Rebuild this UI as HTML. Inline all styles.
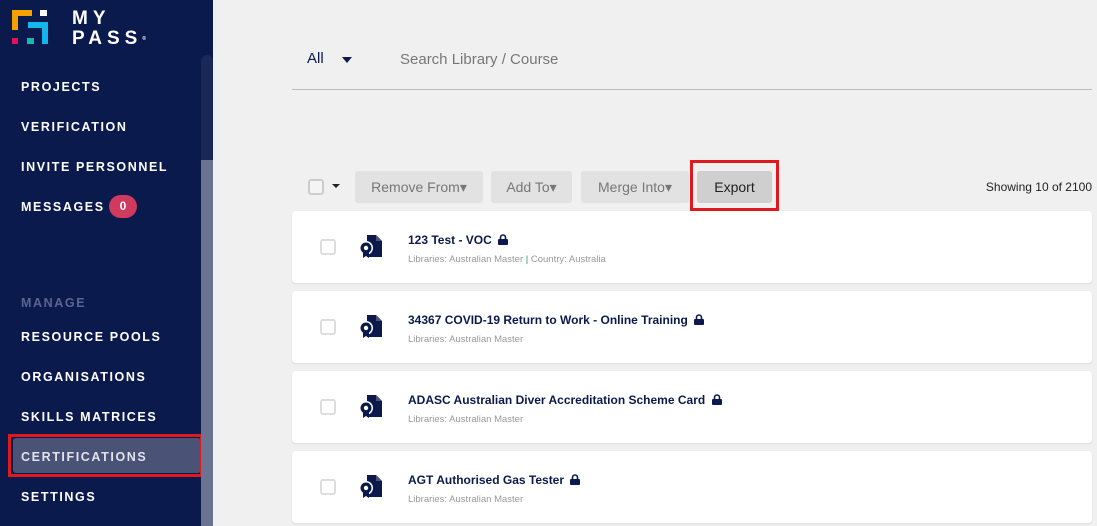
<!DOCTYPE html><html><head><style>
*{box-sizing:border-box;margin:0;padding:0}
body{width:1097px;height:526px;overflow:hidden;background:#f0f0f0;font-family:"Liberation Sans",sans-serif;position:relative}
.sb{position:absolute;left:0;top:0;width:213px;height:526px;background:#0b1a4c}
.nav{position:absolute;left:21px;color:#fff;font-weight:bold;font-size:12.5px;letter-spacing:1.6px}
.track{position:absolute;left:201px;top:55px;width:12px;height:471px;background:#1a2858;border-radius:6px 6px 0 0}
.thumb{position:absolute;left:201px;top:160px;width:12px;height:366px;background:#6a7390}
.btn{position:absolute;top:171px;height:32px;background:#e2e2e2;border-radius:3px;color:#777;font-size:14px;line-height:32px;text-align:center}
.card{position:absolute;left:292px;width:800px;height:72px;background:#fff;border-radius:4px;box-shadow:0 1px 2px rgba(0,0,0,.08)}
.cb{position:absolute;left:28px;top:28px;width:16px;height:16px;border:2px solid #ddd;border-radius:3px}
.ic{position:absolute;left:66px;top:22px}
.t{position:absolute;left:116px;top:22px;font-size:12px;font-weight:bold;color:#0b1a4c}
.s{position:absolute;left:116px;top:43px;font-size:9.5px;color:#999}
.lk{display:inline-block;vertical-align:-1px;margin-left:3px}
</style></head><body>
<div class="sb">
<svg style="position:absolute;left:0;top:0" width="60" height="50">
<rect x="12" y="10" width="20" height="6" fill="#f5a100"/><rect x="12" y="10" width="6" height="20" fill="#f5a100"/>
<rect x="40" y="10" width="7" height="6" fill="#fff"/>
<rect x="28" y="22" width="20" height="6" fill="#13b5ea"/><rect x="42" y="22" width="6" height="22" fill="#13b5ea"/>
<rect x="12" y="38" width="6" height="6" fill="#e0105a"/><rect x="27" y="38" width="7" height="6" fill="#19b8a8"/>
</svg>
<div style="position:absolute;left:72px;top:9px;color:#fff;font-weight:bold;font-size:19px;letter-spacing:5px;line-height:20px">MY<br>PASS<span style="font-size:5px;vertical-align:top;letter-spacing:0">®</span></div>
<div class="nav" style="top:80px">PROJECTS</div>
<div class="nav" style="top:120px">VERIFICATION</div>
<div class="nav" style="top:160px">INVITE PERSONNEL</div>
<div class="nav" style="top:200px">MESSAGES</div>
<div style="position:absolute;left:109px;top:195px;width:28px;height:23px;border-radius:12px;background:#cf3a5e;color:#fff;font-weight:bold;font-size:12px;text-align:center;line-height:23px">0</div>
<div class="nav" style="top:296px;color:#5a6690">MANAGE</div>
<div class="nav" style="top:330px">RESOURCE POOLS</div>
<div class="nav" style="top:370px">ORGANISATIONS</div>
<div class="nav" style="top:410px">SKILLS MATRICES</div>
<div style="position:absolute;left:13px;top:438px;width:188px;height:35px;background:#4a5275;border-radius:3px"></div>
<div class="nav" style="top:450px;color:#e0e4ee">CERTIFICATIONS</div>
<div style="position:absolute;left:8px;top:434px;width:195px;height:43px;border:3px solid #e0191f"></div>
<div class="nav" style="top:490px">SETTINGS</div>
<div class="track"></div><div class="thumb"></div>
</div>
<div style="position:absolute;left:307px;top:50px;font-size:15px;color:#0b1a4c">All</div>
<div style="position:absolute;left:342px;top:57px;border:5px solid transparent;border-top:6px solid #0b1a4c"></div>
<div style="position:absolute;left:400px;top:51px;font-size:15px;color:#777">Search Library / Course</div>
<div style="position:absolute;left:292px;top:89px;width:800px;height:1px;background:#bbb"></div>
<div style="position:absolute;left:308px;top:179px;width:16px;height:16px;border:2px solid #ccc;border-radius:3px;background:#f4f4f4"></div>
<div style="position:absolute;left:332px;top:184px;border:4px solid transparent;border-top:4px solid #222"></div>
<div class="btn" style="left:355px;width:128px">Remove From▾</div>
<div class="btn" style="left:491px;width:81px">Add To▾</div>
<div class="btn" style="left:581px;width:108px">Merge Into▾</div>
<div class="btn" style="left:697px;width:75px;background:#cfcfcf;color:#222">Export</div>
<div style="position:absolute;left:690px;top:160px;width:89px;height:51px;border:3px solid #e0191f"></div>
<div style="position:absolute;right:5px;top:180px;font-size:12px;color:#222">Showing 10 of 2100</div>
<div class="card" style="top:211px"><div class="cb"></div><svg class="ic" width="26" height="26" viewBox="0 0 26 26"><path d="M9 2H18L24 8V24H9z" fill="#0b1a4c"/><path d="M18 2V8H24z" fill="#4a5275"/><circle cx="8" cy="15" r="7" fill="#fff"/><circle cx="8" cy="15" r="5.5" fill="#0b1a4c"/><circle cx="8" cy="15" r="2.2" fill="#fff"/><path d="M5 19v6l3-2 3 2v-6" fill="#0b1a4c"/></svg><div class="t">123 Test - VOC <svg class="lk" width="10" height="11"><path d="M2.5 5V3.5a2.5 2.5 0 0 1 5 0V5" stroke="#0b1a4c" stroke-width="1.6" fill="none"/><rect x="0" y="5" width="10" height="6" rx="1" fill="#0b1a4c"/></svg></div><div class="s">Libraries: Australian Master <span style="color:#19a34a">|</span> Country: Australia</div></div>
<div class="card" style="top:291px"><div class="cb"></div><svg class="ic" width="26" height="26" viewBox="0 0 26 26"><path d="M9 2H18L24 8V24H9z" fill="#0b1a4c"/><path d="M18 2V8H24z" fill="#4a5275"/><circle cx="8" cy="15" r="7" fill="#fff"/><circle cx="8" cy="15" r="5.5" fill="#0b1a4c"/><circle cx="8" cy="15" r="2.2" fill="#fff"/><path d="M5 19v6l3-2 3 2v-6" fill="#0b1a4c"/></svg><div class="t">34367 COVID-19 Return to Work - Online Training <svg class="lk" width="10" height="11"><path d="M2.5 5V3.5a2.5 2.5 0 0 1 5 0V5" stroke="#0b1a4c" stroke-width="1.6" fill="none"/><rect x="0" y="5" width="10" height="6" rx="1" fill="#0b1a4c"/></svg></div><div class="s">Libraries: Australian Master</div></div>
<div class="card" style="top:371px"><div class="cb"></div><svg class="ic" width="26" height="26" viewBox="0 0 26 26"><path d="M9 2H18L24 8V24H9z" fill="#0b1a4c"/><path d="M18 2V8H24z" fill="#4a5275"/><circle cx="8" cy="15" r="7" fill="#fff"/><circle cx="8" cy="15" r="5.5" fill="#0b1a4c"/><circle cx="8" cy="15" r="2.2" fill="#fff"/><path d="M5 19v6l3-2 3 2v-6" fill="#0b1a4c"/></svg><div class="t">ADASC Australian Diver Accreditation Scheme Card <svg class="lk" width="10" height="11"><path d="M2.5 5V3.5a2.5 2.5 0 0 1 5 0V5" stroke="#0b1a4c" stroke-width="1.6" fill="none"/><rect x="0" y="5" width="10" height="6" rx="1" fill="#0b1a4c"/></svg></div><div class="s">Libraries: Australian Master</div></div>
<div class="card" style="top:451px"><div class="cb"></div><svg class="ic" width="26" height="26" viewBox="0 0 26 26"><path d="M9 2H18L24 8V24H9z" fill="#0b1a4c"/><path d="M18 2V8H24z" fill="#4a5275"/><circle cx="8" cy="15" r="7" fill="#fff"/><circle cx="8" cy="15" r="5.5" fill="#0b1a4c"/><circle cx="8" cy="15" r="2.2" fill="#fff"/><path d="M5 19v6l3-2 3 2v-6" fill="#0b1a4c"/></svg><div class="t">AGT Authorised Gas Tester <svg class="lk" width="10" height="11"><path d="M2.5 5V3.5a2.5 2.5 0 0 1 5 0V5" stroke="#0b1a4c" stroke-width="1.6" fill="none"/><rect x="0" y="5" width="10" height="6" rx="1" fill="#0b1a4c"/></svg></div><div class="s">Libraries: Australian Master</div></div>
</body></html>
